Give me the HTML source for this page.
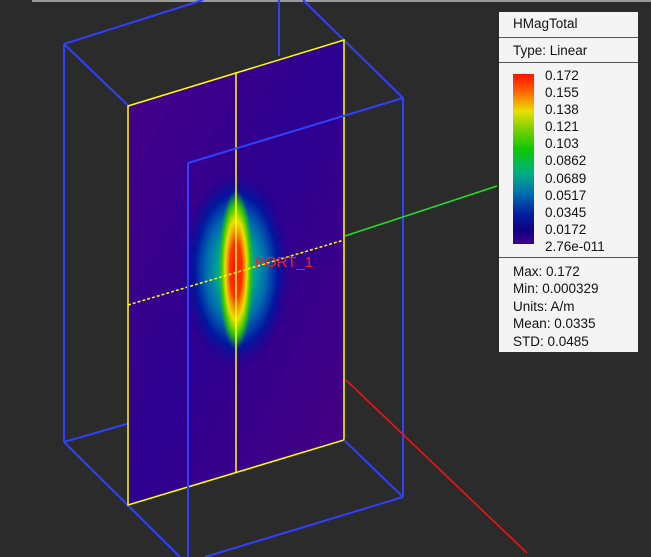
<!DOCTYPE html><html><head><style>
body{margin:0;width:651px;height:557px;background:#2b2b2b;overflow:hidden;position:relative;font-family:"Liberation Sans",sans-serif}
.lg{position:absolute;left:499px;top:12px;width:139px;height:340px;background:#f4f4f4;font-size:13.5px;color:#111}
.lg div{position:absolute;white-space:nowrap}
.hr{left:0;width:139px;height:1px;background:#555}
</style></head><body>
<div style="position:absolute;left:32px;top:0;width:619px;height:2px;background:#9a9a9a"></div>
<svg width="651" height="557" style="position:absolute;left:0;top:0">
<defs>
<linearGradient id="bg" x1="0" y1="0" x2="1" y2="1"><stop offset="0" stop-color="#4a0086"/><stop offset=".5" stop-color="#2c0090"/><stop offset="1" stop-color="#4a0080"/></linearGradient>
<radialGradient id="f" cx="236" cy="270" r="100" gradientUnits="userSpaceOnUse" gradientTransform="translate(236 270) scale(0.55 1) translate(-236 -270)">
<stop offset="0" stop-color="#10c800"/><stop offset=".3" stop-color="#00b090"/><stop offset=".55" stop-color="#0068b0"/><stop offset=".75" stop-color="#0018a0"/><stop offset="1" stop-color="#200090" stop-opacity="0"/></radialGradient>
<radialGradient id="g" cx="236" cy="270" r="80" gradientUnits="userSpaceOnUse" gradientTransform="translate(236 270) scale(0.22 1) translate(-236 -270)">
<stop offset="0" stop-color="#ff1000"/><stop offset=".35" stop-color="#ff3000"/><stop offset=".5" stop-color="#f0a000"/><stop offset=".62" stop-color="#e8e000"/><stop offset=".8" stop-color="#40c800"/><stop offset="1" stop-color="#10c800" stop-opacity="0"/></radialGradient>
<clipPath id="pc"><polygon points="128,106 344,40 344,440 128,505"/></clipPath>
</defs>
<g stroke="#3040ff" stroke-width="2" fill="none">
<line x1="64" y1="44" x2="203" y2="0"/><line x1="64" y1="44" x2="64" y2="442"/>
<line x1="64" y1="442" x2="130" y2="423"/><line x1="64" y1="442" x2="180" y2="557"/>
<line x1="279" y1="0" x2="279" y2="56"/><line x1="303" y1="0" x2="403" y2="98"/>
<line x1="64" y1="44" x2="188" y2="163"/>
</g>
<g clip-path="url(#pc)"><rect x="120" y="30" width="230" height="480" fill="url(#bg)"/><rect x="120" y="30" width="230" height="480" fill="url(#f)"/><rect x="120" y="30" width="230" height="480" fill="url(#g)"/></g>
<g stroke="#ffff00" stroke-width="1.5" fill="none">
<polygon points="128,106 344,40 344,440 128,505"/>
<line x1="236" y1="72" x2="236" y2="473"/>
<line x1="128" y1="305" x2="344" y2="240" stroke-dasharray="3,2"/>
</g>
<g stroke="#3040ff" stroke-width="2" fill="none">
<line x1="188" y1="163" x2="403" y2="98"/><line x1="188" y1="163" x2="188" y2="557"/>
<line x1="403" y1="98" x2="403" y2="497"/><line x1="403" y1="497" x2="205" y2="557"/>
<line x1="344" y1="440" x2="403" y2="497"/>
</g>
<line x1="345" y1="236" x2="497" y2="186" stroke="#20e020" stroke-width="1.5"/>
<line x1="346" y1="380" x2="527" y2="553" stroke="#ff1010" stroke-width="1.5"/>
<text x="255" y="267" fill="#ff2020" font-size="15" font-family="Liberation Sans">PORT_1</text>
</svg>
<div class="lg">
<div style="left:14px;top:4px">HMagTotal</div>
<div class="hr" style="top:25px"></div>
<div style="left:14px;top:31px">Type: Linear</div>
<div class="hr" style="top:50px"></div>
<div style="left:14px;top:62px;width:21px;height:170px;background:linear-gradient(#ff1000,#ff6000 10%,#e8e000 22%,#80d000 32%,#10c800 44%,#00b080 58%,#0070b0 70%,#0020a0 82%,#100080 92%,#400090)"></div>
<div style="left:46px;top:55px;line-height:17.1px">0.172<br>0.155<br>0.138<br>0.121<br>0.103<br>0.0862<br>0.0689<br>0.0517<br>0.0345<br>0.0172<br>2.76e-011</div>
<div class="hr" style="top:245px"></div>
<div style="left:14px;top:251px;line-height:17.4px">Max: 0.172<br>Min: 0.000329<br>Units: A/m<br>Mean: 0.0335<br>STD: 0.0485</div>
</div>
</body></html>
